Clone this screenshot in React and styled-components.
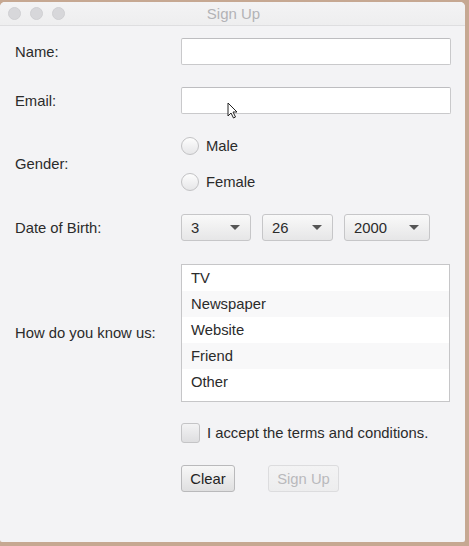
import React from "react";
import styled, { createGlobalStyle } from "styled-components";

const Global = createGlobalStyle`
  html, body { margin: 0; padding: 0; background: #c6a892; }
  body { font-family: "Liberation Sans", Arial, Helvetica, sans-serif; font-size: 14.8px; color: #2b2b2b; }
  #root { width: 469px; height: 546px; overflow: hidden; }
`;

const Window = styled.div`
  position: relative;
  margin-top: 2px;
  width: 465px;
  height: 540px;
  background: #f3f3f5;
  border-radius: 5px 5px 2px 2px;
  overflow: hidden;
  box-sizing: border-box;
`;

const TitleBar = styled.div`
  height: 23px;
  display: flex;
  align-items: center;
  justify-content: center;
  position: relative;
  background: linear-gradient(#f3f3f4, #eeeeef);
  border-bottom: 1px solid #dedee0;
`;

const Lights = styled.div`
  position: absolute;
  left: 8px;
  top: 5px;
  display: flex;
  gap: 9px;
`;

const Light = styled.span`
  width: 13px;
  height: 13px;
  border-radius: 50%;
  background: #d7d7da;
  border: 0.5px solid #cfcfd2;
  box-sizing: border-box;
`;

const Title = styled.div`
  color: #b3b3b6;
  font-size: 15px;
  margin-left: 2px;
`;

const Form = styled.div`
  display: flex;
  flex-direction: column;
  padding: 12px 15px 0 15px;
`;

const Row = styled.div`
  display: grid;
  grid-template-columns: 166px 1fr;
  align-items: center;
  margin-top: ${(p) => p.$gap || 0}px;
`;

const Label = styled.div`
  color: #2b2b2b;
  white-space: nowrap;
`;

const TextInput = styled.div`
  height: 27px;
  width: 270px;
  box-sizing: border-box;
  background: #fff;
  border: 1px solid #c9c9cb;
  border-top-color: #bdbdc0;
  border-radius: 2px;
`;

const RadioGroup = styled.div`
  display: flex;
  flex-direction: column;
  gap: 18px;
`;

const RadioItem = styled.div`
  display: flex;
  align-items: center;
  gap: 7px;
  height: 18px;
`;

const RadioCircle = styled.span`
  width: 18px;
  height: 18px;
  border-radius: 50%;
  box-sizing: border-box;
  border: 1px solid #c2c2c4;
  background: linear-gradient(#fdfdfd, #e6e6e8);
`;

const Combos = styled.div`
  display: flex;
  gap: 11px;
`;

const Combo = styled.div`
  width: ${(p) => p.$w}px;
  height: 27px;
  box-sizing: border-box;
  display: flex;
  align-items: center;
  justify-content: space-between;
  padding: 0 9px 0 9px;
  border: 1px solid #c6c6c8;
  border-radius: 3px;
  background: linear-gradient(#f9f9f9, #e6e6e7);
  color: #2b2b2b;
`;

const Arrow = styled.span`
  width: 0;
  height: 0;
  border-left: 5px solid transparent;
  border-right: 5px solid transparent;
  border-top: 5px solid #555;
  margin-right: 1px;
`;

const List = styled.div`
  width: 269px;
  height: 138px;
  box-sizing: border-box;
  background: #fff;
  border: 1px solid #c6c6c8;
  display: flex;
  flex-direction: column;
`;

const ListItem = styled.div`
  height: 26px;
  line-height: 26px;
  padding-left: 9px;
  background: ${(p) => (p.$alt ? "#f8f8f9" : "#ffffff")};
  color: #2b2b2b;
`;

const CheckRow = styled.div`
  display: flex;
  align-items: center;
  gap: 7px;
  white-space: nowrap;
`;

const CheckBox = styled.span`
  width: 19px;
  height: 20px;
  box-sizing: border-box;
  border: 1px solid #c4c4c6;
  border-radius: 3px;
  background: linear-gradient(#f3f3f4, #dedee0);
`;

const Buttons = styled.div`
  display: flex;
  gap: 33px;
`;

const Button = styled.div`
  height: 27px;
  width: ${(p) => p.$w}px;
  box-sizing: border-box;
  display: flex;
  align-items: center;
  justify-content: center;
  border-radius: 3px;
  border: 1px solid ${(p) => (p.$disabled ? "#dcdcde" : "#b9b9bb")};
  background: ${(p) =>
    p.$disabled ? "linear-gradient(#f3f3f4, #ededee)" : "linear-gradient(#f7f7f7, #dfdfe0)"};
  color: ${(p) => (p.$disabled ? "#b9b9bc" : "#222")};
`;

const Cursor = styled.svg`
  position: absolute;
  left: 227px;
  top: 100px;
`;

export default function App() {
  return (
    <>
      <Global />
      <Window>
        <TitleBar>
          <Lights>
            <Light />
            <Light />
            <Light />
          </Lights>
          <Title>Sign Up</Title>
        </TitleBar>
        <Form>
          <Row>
            <Label>Name:</Label>
            <TextInput />
          </Row>
          <Row $gap={22}>
            <Label>Email:</Label>
            <TextInput />
          </Row>
          <Row $gap={23}>
            <Label>Gender:</Label>
            <RadioGroup>
              <RadioItem>
                <RadioCircle />
                Male
              </RadioItem>
              <RadioItem>
                <RadioCircle />
                Female
              </RadioItem>
            </RadioGroup>
          </Row>
          <Row $gap={23}>
            <Label>Date of Birth:</Label>
            <Combos>
              <Combo $w={70}>
                3<Arrow />
              </Combo>
              <Combo $w={71}>
                26<Arrow />
              </Combo>
              <Combo $w={86}>
                2000<Arrow />
              </Combo>
            </Combos>
          </Row>
          <Row $gap={23}>
            <Label>How do you know us:</Label>
            <List>
              {["TV", "Newspaper", "Website", "Friend", "Other"].map((t, i) => (
                <ListItem key={t} $alt={i % 2 === 1}>
                  {t}
                </ListItem>
              ))}
            </List>
          </Row>
          <Row $gap={21}>
            <span />
            <CheckRow>
              <CheckBox />
              I accept the terms and conditions.
            </CheckRow>
          </Row>
          <Row $gap={22}>
            <span />
            <Buttons>
              <Button $w={54}>Clear</Button>
              <Button $w={71} $disabled>
                Sign Up
              </Button>
            </Buttons>
          </Row>
        </Form>
        <Cursor width="12" height="18" viewBox="0 0 12 18">
          <path d="M1 1 L1 14 L4 11 L6.5 16 L8.5 15 L6 10 L10 10 Z" fill="#fff" stroke="#222" strokeWidth="1" strokeLinejoin="round" />
        </Cursor>
      </Window>
    </>
  );
}
